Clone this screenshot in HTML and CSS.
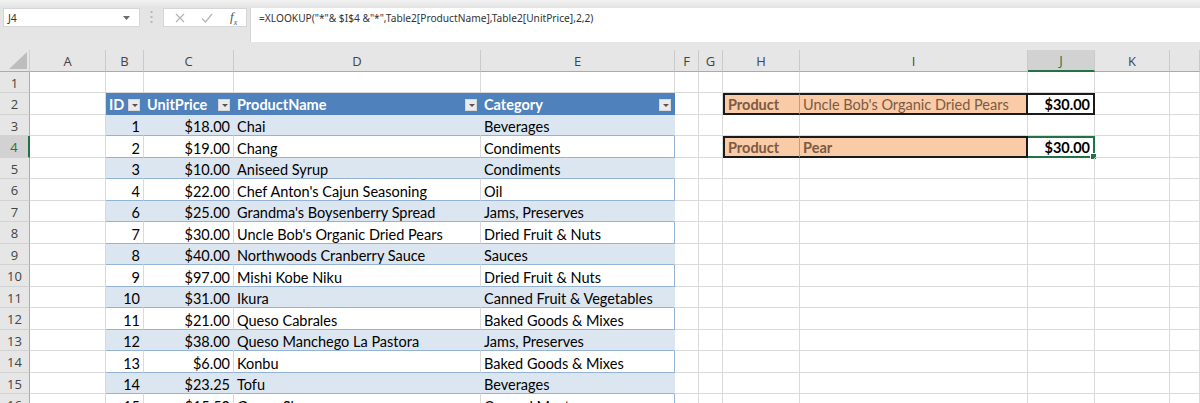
FILE: index.html
```html
<!DOCTYPE html>
<html lang="en">

<head>
    <meta charset="UTF-8">
    <title>XLOOKUP wildcard match</title>
    <link rel="stylesheet" href="styles.css">
</head>

<body>
    <div class="formula-bar">
        <div class="name-box">
            <span>J4</span>
            <svg class="name-arrow" width="7" height="4" viewBox="0 0 7 4"><path d="M0 0h7L3.5 4z" fill="#6a6a6a"/></svg>
        </div>
        <svg class="grip" width="3" height="13" viewBox="0 0 3 13">
            <rect x="0.5" y="0" width="2" height="2" fill="#b9b9b9"/>
            <rect x="0.5" y="5" width="2" height="2" fill="#b9b9b9"/>
            <rect x="0.5" y="10" width="2" height="2" fill="#b9b9b9"/>
        </svg>
        <div class="fx-box">
            <svg class="fx-btn" width="10" height="10" viewBox="0 0 10 10"><path d="M1 1l8 8M9 1l-8 8" stroke="#b4b4b4" stroke-width="1.2"/></svg>
            <svg class="fx-btn" width="12" height="10" viewBox="0 0 12 10"><path d="M1 5.5l3.5 3.5L11 1" stroke="#b4b4b4" stroke-width="1.2" fill="none"/></svg>
            <span class="fx"><i>f</i><sub>x</sub></span>
        </div>
        <div class="formula">=XLOOKUP("*"&amp; $I$4 &amp;"*",Table2[ProductName],Table2[UnitPrice],2,2)</div>
    </div>

    <div class="sheet">
        <div class="row heads">
            <div class="corner">
                <svg width="18" height="17" viewBox="0 0 18 17"><path d="M18 0V17H0z" fill="#bdbdbd"/></svg>
            </div>
            <div class="ch">A</div>
            <div class="ch">B</div>
            <div class="ch">C</div>
            <div class="ch">D</div>
            <div class="ch">E</div>
            <div class="ch">F</div>
            <div class="ch">G</div>
            <div class="ch">H</div>
            <div class="ch">I</div>
            <div class="ch active">J</div>
            <div class="ch">K</div>
            <div class="ch"></div>
        </div>

        <!-- row 1 -->
        <div class="row">
            <div class="rh">1</div>
            <div class="c"></div><div class="c"></div><div class="c"></div><div class="c"></div><div class="c"></div>
            <div class="c"></div><div class="c"></div><div class="c"></div><div class="c"></div><div class="c"></div>
            <div class="c"></div><div class="c"></div>
        </div>

        <!-- row 2: table header + first lookup -->
        <div class="row">
            <div class="rh">2</div>
            <div class="c"></div>
            <div class="c th">ID<span class="filter"></span></div>
            <div class="c th">UnitPrice<span class="filter"></span></div>
            <div class="c th">ProductName<span class="filter"></span></div>
            <div class="c th">Category<span class="filter"></span></div>
            <div class="c"></div>
            <div class="c"></div>
            <div class="c lk lk-label">Product</div>
            <div class="c lk lk-value">Uncle Bob's Organic Dried Pears</div>
            <div class="c result">$30.00</div>
            <div class="c"></div>
            <div class="c"></div>
        </div>

        <div class="row band">
            <div class="rh">3</div>
            <div class="c"></div>
            <div class="c num">1</div><div class="c num">$18.00</div><div class="c">Chai</div><div class="c last">Beverages</div>
            <div class="c"></div><div class="c"></div><div class="c"></div><div class="c"></div><div class="c"></div><div class="c"></div><div class="c"></div>
        </div>

        <!-- row 4: active row, second lookup -->
        <div class="row plain">
            <div class="rh active">4</div>
            <div class="c"></div>
            <div class="c num">2</div><div class="c num">$19.00</div><div class="c">Chang</div><div class="c last">Condiments</div>
            <div class="c"></div>
            <div class="c"></div>
            <div class="c lk lk-label">Product</div>
            <div class="c lk lk-value bold">Pear</div>
            <div class="c selected">$30.00<span class="handle"></span></div>
            <div class="c"></div>
            <div class="c"></div>
        </div>

        <div class="row band">
            <div class="rh">5</div>
            <div class="c"></div>
            <div class="c num">3</div><div class="c num">$10.00</div><div class="c">Aniseed Syrup</div><div class="c last">Condiments</div>
            <div class="c"></div><div class="c"></div><div class="c"></div><div class="c"></div><div class="c"></div><div class="c"></div><div class="c"></div>
        </div>
        <div class="row plain">
            <div class="rh">6</div>
            <div class="c"></div>
            <div class="c num">4</div><div class="c num">$22.00</div><div class="c">Chef Anton's Cajun Seasoning</div><div class="c last">Oil</div>
            <div class="c"></div><div class="c"></div><div class="c"></div><div class="c"></div><div class="c"></div><div class="c"></div><div class="c"></div>
        </div>
        <div class="row band">
            <div class="rh">7</div>
            <div class="c"></div>
            <div class="c num">6</div><div class="c num">$25.00</div><div class="c">Grandma's Boysenberry Spread</div><div class="c last">Jams, Preserves</div>
            <div class="c"></div><div class="c"></div><div class="c"></div><div class="c"></div><div class="c"></div><div class="c"></div><div class="c"></div>
        </div>
        <div class="row plain">
            <div class="rh">8</div>
            <div class="c"></div>
            <div class="c num">7</div><div class="c num">$30.00</div><div class="c">Uncle Bob's Organic Dried Pears</div><div class="c last">Dried Fruit &amp; Nuts</div>
            <div class="c"></div><div class="c"></div><div class="c"></div><div class="c"></div><div class="c"></div><div class="c"></div><div class="c"></div>
        </div>
        <div class="row band">
            <div class="rh">9</div>
            <div class="c"></div>
            <div class="c num">8</div><div class="c num">$40.00</div><div class="c">Northwoods Cranberry Sauce</div><div class="c last">Sauces</div>
            <div class="c"></div><div class="c"></div><div class="c"></div><div class="c"></div><div class="c"></div><div class="c"></div><div class="c"></div>
        </div>
        <div class="row plain">
            <div class="rh">10</div>
            <div class="c"></div>
            <div class="c num">9</div><div class="c num">$97.00</div><div class="c">Mishi Kobe Niku</div><div class="c last">Dried Fruit &amp; Nuts</div>
            <div class="c"></div><div class="c"></div><div class="c"></div><div class="c"></div><div class="c"></div><div class="c"></div><div class="c"></div>
        </div>
        <div class="row band">
            <div class="rh">11</div>
            <div class="c"></div>
            <div class="c num">10</div><div class="c num">$31.00</div><div class="c">Ikura</div><div class="c last">Canned Fruit &amp; Vegetables</div>
            <div class="c"></div><div class="c"></div><div class="c"></div><div class="c"></div><div class="c"></div><div class="c"></div><div class="c"></div>
        </div>
        <div class="row plain">
            <div class="rh">12</div>
            <div class="c"></div>
            <div class="c num">11</div><div class="c num">$21.00</div><div class="c">Queso Cabrales</div><div class="c last">Baked Goods &amp; Mixes</div>
            <div class="c"></div><div class="c"></div><div class="c"></div><div class="c"></div><div class="c"></div><div class="c"></div><div class="c"></div>
        </div>
        <div class="row band">
            <div class="rh">13</div>
            <div class="c"></div>
            <div class="c num">12</div><div class="c num">$38.00</div><div class="c">Queso Manchego La Pastora</div><div class="c last">Jams, Preserves</div>
            <div class="c"></div><div class="c"></div><div class="c"></div><div class="c"></div><div class="c"></div><div class="c"></div><div class="c"></div>
        </div>
        <div class="row plain">
            <div class="rh">14</div>
            <div class="c"></div>
            <div class="c num">13</div><div class="c num">$6.00</div><div class="c">Konbu</div><div class="c last">Baked Goods &amp; Mixes</div>
            <div class="c"></div><div class="c"></div><div class="c"></div><div class="c"></div><div class="c"></div><div class="c"></div><div class="c"></div>
        </div>
        <div class="row band">
            <div class="rh">15</div>
            <div class="c"></div>
            <div class="c num">14</div><div class="c num">$23.25</div><div class="c">Tofu</div><div class="c last">Beverages</div>
            <div class="c"></div><div class="c"></div><div class="c"></div><div class="c"></div><div class="c"></div><div class="c"></div><div class="c"></div>
        </div>
        <div class="row plain">
            <div class="rh">16</div>
            <div class="c"></div>
            <div class="c num">15</div><div class="c num">$15.50</div><div class="c">Genen Shouyu</div><div class="c last">Canned Meat</div>
            <div class="c"></div><div class="c"></div><div class="c"></div><div class="c"></div><div class="c"></div><div class="c"></div><div class="c"></div>
        </div>
    </div>
</body>

</html>
```

FILE: styles.css
```css
body {
    margin: 0;
    background-color: #ffffff;
    overflow: hidden;
    font-family: Lato, "Liberation Sans", sans-serif;
}

/* formula bar */

.formula-bar {
    display: flex;
    align-items: flex-start;
    height: 50px;
    padding-top: 8px;
    box-sizing: border-box;
    background: linear-gradient(#f3f3f3 0, #e4e4e4 7px, #e6e6e6 100%);
}

.name-box {
    display: flex;
    align-items: center;
    justify-content: space-between;
    width: 137px;
    height: 19px;
    margin-left: 3px;
    padding: 0 9px 0 4px;
    box-sizing: border-box;
    background-color: #ffffff;
    border: 1px solid #d6d6d6;
    font-family: "Noto Sans", sans-serif;
    font-size: 10.5px;
    color: #333333;
}

.grip {
    margin: 3px 0 0 10px;
}

.fx-box {
    display: flex;
    align-items: center;
    width: 84px;
    height: 19px;
    margin-left: 10px;
    padding-left: 11px;
    box-sizing: border-box;
    background-color: #ffffff;
    border: 1px solid #d6d6d6;
}

.fx-btn {
    margin-right: 16px;
}

.fx {
    margin-left: 1px;
    font-family: "Liberation Serif", serif;
    font-size: 13px;
    color: #555555;
}

.fx sub {
    font-size: 8px;
    font-style: italic;
}

.formula {
    flex: 1;
    height: 34px;
    margin-left: 3px;
    padding: 3px 0 0 8px;
    box-sizing: border-box;
    background-color: #ffffff;
    border-left: 1px solid #d6d6d6;
    font-family: "Noto Sans", sans-serif;
    font-size: 10.2px;
    color: #333333;
    white-space: nowrap;
}

/* sheet grid */

.row {
    display: grid;
    grid-template-columns: 30px 76px 38px 90px 247px 194px 24px 24px 77px 228px 67px 75px 30px;
    height: 21.5px;
}

.heads {
    background-color: #e6e6e6;
}

.corner {
    display: flex;
    align-items: flex-end;
    justify-content: flex-end;
    padding: 0 2px 2px 0;
    border-right: 1px solid #d0d0d0;
    border-bottom: 1px solid #ababab;
}

.ch {
    display: flex;
    align-items: center;
    justify-content: center;
    padding-top: 1px;
    border-right: 1px solid #cacaca;
    border-bottom: 1px solid #ababab;
    font-family: "Open Sans", sans-serif;
    font-size: 13px;
    color: #444444;
}

.ch.active {
    background-color: #d2d2d2;
    border-bottom: 2px solid #217346;
    color: #217346;
}

.rh {
    display: flex;
    align-items: center;
    justify-content: center;
    padding-top: 2px;
    background-color: #e6e6e6;
    border-right: 1px solid #ababab;
    border-bottom: 1px solid #d2d2d2;
    font-family: "Open Sans", sans-serif;
    font-size: 13px;
    color: #444444;
}

.rh.active {
    background-color: #d2d2d2;
    border-right: 2px solid #217346;
    color: #217346;
}

.c {
    position: relative;
    display: flex;
    align-items: flex-end;
    padding: 0 3px;
    box-sizing: border-box;
    border-right: 1px solid #dadada;
    border-bottom: 1px solid #dadada;
    font-size: 14.5px;
    line-height: 16px;
    color: #000000;
    white-space: nowrap;
    overflow: hidden;
}

.num {
    justify-content: flex-end;
}

/* Table2 */

.th {
    align-items: center;
    padding-top: 3px;
    background-color: #4f81bd;
    border-right-color: #4f81bd;
    border-bottom-color: #4f81bd;
    font-weight: bold;
    color: #ffffff;
}

.filter {
    position: relative;
    width: 12px;
    height: 12px;
    margin-left: auto;
    background-color: #ebebeb;
    border: 1px solid #d7d7d7;
    box-sizing: border-box;
}

.filter::after {
    content: "";
    position: absolute;
    left: 3px;
    top: 4px;
    border-left: 3px solid transparent;
    border-right: 3px solid transparent;
    border-top: 3px solid #555555;
}

.band .c:nth-child(n+3):nth-child(-n+6) {
    background-color: #dce6f1;
    border-right-color: #dce6f1;
    border-bottom-color: #95b3d7;
}

.plain .c:nth-child(n+3):nth-child(-n+6) {
    border-bottom-color: #95b3d7;
}

.row .c.last {
    border-right-color: #95b3d7;
}

/* lookup cells */

.lk {
    background-color: #f9cba6;
    border-top: 2px solid #1a1a1a;
    border-bottom: 2px solid #1a1a1a;
    color: #7c5a44;
}

.lk-label {
    border-left: 2px solid #1a1a1a;
    border-right: 1px solid #c79a78;
    font-weight: bold;
}

.lk-value {
    border-right: 2px solid #1a1a1a;
}

.bold {
    font-weight: bold;
}

.result {
    justify-content: flex-end;
    border-top: 2px solid #1a1a1a;
    border-right: 2px solid #1a1a1a;
    border-bottom: 2px solid #1a1a1a;
    font-weight: bold;
}

.selected {
    justify-content: flex-end;
    overflow: visible;
    border: 2px solid #217346;
    border-left: none;
    font-weight: bold;
}

.handle {
    position: absolute;
    right: -4px;
    bottom: -4px;
    width: 5px;
    height: 5px;
    background-color: #217346;
    border: 1px solid #ffffff;
}
```
